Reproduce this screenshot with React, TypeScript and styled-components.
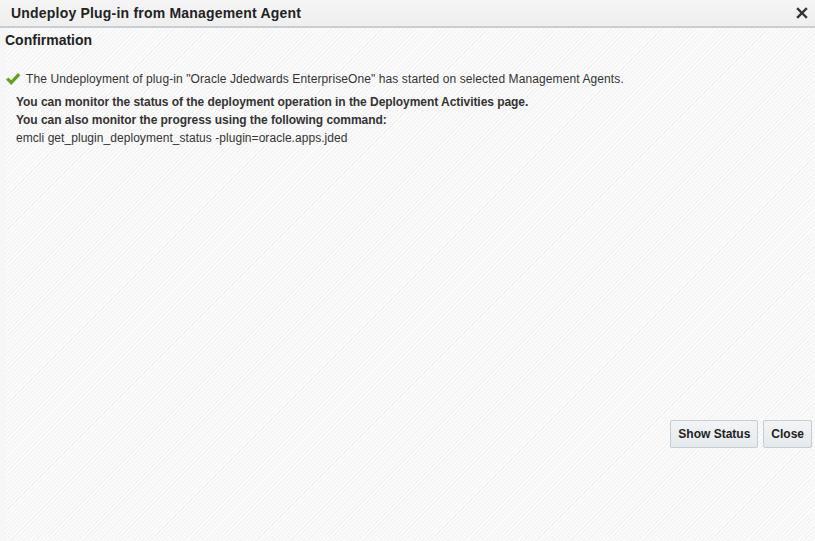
import React from 'react'
import styled, { createGlobalStyle } from 'styled-components'

const GlobalStyle = createGlobalStyle`
  html, body {
    margin: 0;
    padding: 0;
    width: 815px;
    height: 541px;
    overflow: hidden;
    font-family: Arial, "Liberation Sans", Helvetica, sans-serif;
    color: #333;
  }
`

const Dialog = styled.div`
  width: 815px;
  height: 541px;
  display: flex;
  flex-direction: column;
`

const Header = styled.div`
  height: 26px;
  flex: none;
  display: flex;
  align-items: center;
  justify-content: space-between;
  padding: 0 6px 0 11px;
  background: linear-gradient(#f5f5f5, #efefef);
  border-bottom: 2px solid #c9ced3;
`

const Title = styled.div`
  font-size: 14px;
  font-weight: bold;
  color: #222;
  letter-spacing: 0.2px;
`

const CloseIcon = styled.button`
  border: 0;
  background: none;
  padding: 0;
  width: 14px;
  height: 14px;
  display: flex;
  cursor: pointer;
`

const BodyRow = styled.div`
  flex: 1;
  display: flex;
`

const Gutter = styled.div`
  width: 5px;
  flex: none;
  background: #f6f6f6;
`

const Content = styled.div`
  flex: 1;
  display: flex;
  flex-direction: column;
  padding: 4px 3px 0 0;
  background: repeating-linear-gradient(
    -45deg,
    #fcfcfc 0px,
    #fcfcfc 1.5px,
    #f4f4f4 1.5px,
    #f4f4f4 3px
  );
`

const Heading = styled.div`
  font-size: 14px;
  font-weight: bold;
  color: #222;
  height: 17px;
  line-height: 17px;
`

const Message = styled.div`
  display: flex;
  align-items: center;
  gap: 5px;
  margin-top: 22px;
  font-size: 12px;
  color: #333;
  height: 16px;
  letter-spacing: 0.1px;
`

const Detail = styled.div<{ $bold?: boolean }>`
  padding-left: 11px;
  font-size: 12px;
  line-height: 18px;
  font-weight: ${p => (p.$bold ? 'bold' : 'normal')};
  letter-spacing: ${p => (p.$bold ? '-0.05px' : '0.05px')};
  color: #333;
`

const Details = styled.div`
  margin-top: 6px;
  display: flex;
  flex-direction: column;
`

const Actions = styled.div`
  margin-top: 273px;
  display: flex;
  justify-content: flex-end;
  gap: 5px;
`

const Button = styled.button`
  height: 28px;
  padding: 0 7px;
  border: 1px solid #c4ced7;
  border-radius: 2px;
  background: linear-gradient(#f2f4f6, #e6e9ec);
  font-family: Arial, "Liberation Sans", Helvetica, sans-serif;
  font-size: 12px;
  font-weight: bold;
  color: #222;
  cursor: pointer;
`

export default function App() {
  return (
    <Dialog>
      <GlobalStyle />
      <Header>
        <Title>Undeploy Plug-in from Management Agent</Title>
        <CloseIcon aria-label="Close">
          <svg width="14" height="14" viewBox="0 0 14 14">
            <path d="M3 3 L11 11 M11 3 L3 11" stroke="#333" strokeWidth="2.4" strokeLinecap="square" />
          </svg>
        </CloseIcon>
      </Header>
      <BodyRow>
        <Gutter />
        <Content>
          <Heading>Confirmation</Heading>
          <Message>
            <svg width="16" height="14" viewBox="0 0 16 14">
              <path d="M1 7.5 L3.5 5.5 L6.2 8.3 L13 1 L15.3 3.2 L6.2 13 Z" fill="#63a11f" />
            </svg>
            <span>The Undeployment of plug-in "Oracle Jdedwards EnterpriseOne" has started on selected Management Agents.</span>
          </Message>
          <Details>
            <Detail $bold>You can monitor the status of the deployment operation in the Deployment Activities page.</Detail>
            <Detail $bold>You can also monitor the progress using the following command:</Detail>
            <Detail>emcli get_plugin_deployment_status -plugin=oracle.apps.jded</Detail>
          </Details>
          <Actions>
            <Button>Show Status</Button>
            <Button>Close</Button>
          </Actions>
        </Content>
      </BodyRow>
    </Dialog>
  )
}
